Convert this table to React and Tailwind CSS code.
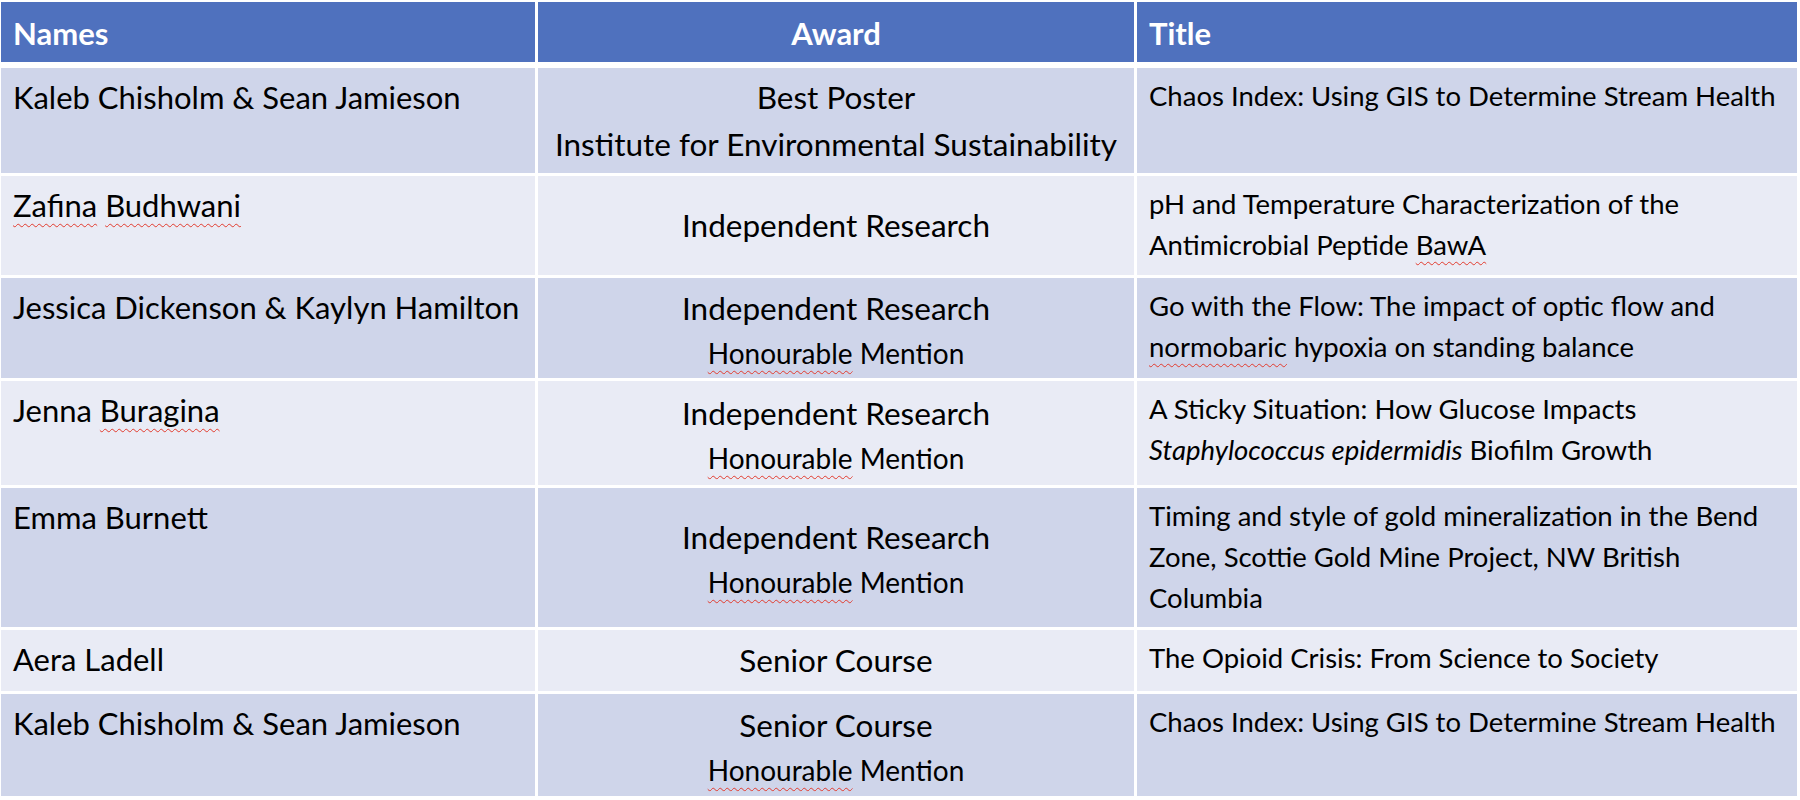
const font = { fontFamily: 'Lato, "Open Sans", sans-serif' }

function Sp({ children }) {
    return (
        <span className='underline decoration-wavy decoration-[#e23b2e] decoration-1 underline-offset-[6px]'>
            {children}
        </span>
    )
}

const rows = [
    {
        h: 'h-[105px]', dark: true,
        name: 'Kaleb Chisholm & Sean Jamieson',
        award: ['Best Poster', 'Institute for Environmental Sustainability'],
        title: ['Chaos Index: Using GIS to Determine Stream Health'],
    },
    {
        h: 'h-[99px]', dark: false,
        name: <><Sp>Zafina</Sp> <Sp>Budhwani</Sp></>,
        award: ['Independent Research'],
        title: ['pH and Temperature Characterization of the', <>Antimicrobial Peptide <Sp>BawA</Sp></>],
    },
    {
        h: 'h-[100px]', dark: true,
        name: 'Jessica Dickenson & Kaylyn Hamilton',
        award: ['Independent Research'], hm: true,
        title: ['Go with the Flow: The impact of optic flow and', <><Sp>normobaric</Sp> hypoxia on standing balance</>],
    },
    {
        h: 'h-[104px]', dark: false,
        name: <>Jenna <Sp>Buragina</Sp></>,
        award: ['Independent Research'], hm: true,
        title: ['A Sticky Situation: How Glucose Impacts', <><i>Staphylococcus epidermidis</i> Biofilm Growth</>],
    },
    {
        h: 'h-[139px]', dark: true,
        name: 'Emma Burnett',
        award: ['Independent Research'], hm: true,
        title: ['Timing and style of gold mineralization in the Bend', 'Zone, Scottie Gold Mine Project, NW British', 'Columbia'],
    },
    {
        h: 'h-[61px]', dark: false,
        name: 'Aera Ladell',
        award: ['Senior Course'],
        title: ['The Opioid Crisis: From Science to Society'],
    },
    {
        h: 'h-[102px]', dark: true,
        name: 'Kaleb Chisholm & Sean Jamieson',
        award: ['Senior Course'], hm: true,
        title: ['Chaos Index: Using GIS to Determine Stream Health'],
    },
]

export default function App() {
    return (
        <div className='w-[1800px] h-[800px] bg-white pt-[2px] pl-[1px] text-black overflow-hidden' style={font}>

            {/* header */}
            <div className='grid grid-cols-[534px_596px_660px] gap-x-[3px] h-[60px] text-white font-bold text-[31px]'>
                <div className='bg-[#4f71be] flex items-center pl-[12px] pt-[3px]'>Names</div>
                <div className='bg-[#4f71be] flex items-center justify-center pt-[3px]'>Award</div>
                <div className='bg-[#4f71be] flex items-center pl-[12px] pt-[3px]'>Title</div>
            </div>

            {/* rows */}
            <div className='mt-[6px] flex flex-col gap-y-[3px]'>
                {rows.map((r, i) => (
                    <div key={i} className={`grid grid-cols-[534px_596px_660px] gap-x-[3px] ${r.h}`}>
                        <div className={`${r.dark ? 'bg-[#cfd5ea]' : 'bg-[#e9ebf5]'} pl-[12px] pt-[9px] text-[31px] leading-[41px] whitespace-nowrap`}>
                            {r.name}
                        </div>
                        <div className={`${r.dark ? 'bg-[#cfd5ea]' : 'bg-[#e9ebf5]'} ${r.hm ? 'pt-[5px]' : ''} flex flex-col items-center justify-center leading-[43px] whitespace-nowrap`}>
                            {r.award.map((a, j) => (
                                <div key={j} className={`text-[31.5px] ${j > 0 ? 'mt-[4px]' : ''}`}>{a}</div>
                            ))}
                            {r.hm && <div className='text-[28px] mt-[2px]'><Sp>Honourable</Sp> Mention</div>}
                        </div>
                        <div className={`${r.dark ? 'bg-[#cfd5ea]' : 'bg-[#e9ebf5]'} pl-[12px] pt-[7px] text-[27.5px] leading-[41px] whitespace-nowrap`}>
                            {r.title.map((t, j) => <div key={j}>{t}</div>)}
                        </div>
                    </div>
                ))}
            </div>

        </div>
    )
}
